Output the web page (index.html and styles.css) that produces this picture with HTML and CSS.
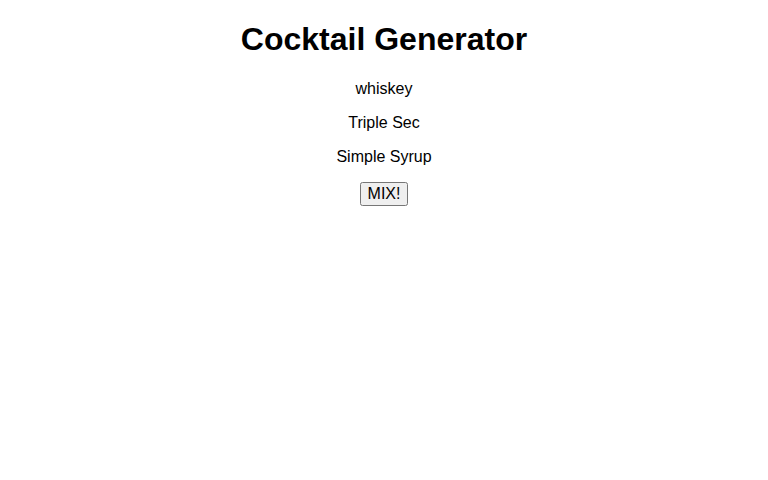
FILE: index.html
```html
<!DOCTYPE html>
<html lang="en">
    <head>
        <meta charset="UTF-8">
        <meta name="viewport" content="width=device-width, initial-scale=1.0">
        <title>Cocktail Generator</title>
        <link rel="stylesheet" href="styles.css">
    </head>
    <body>
		<div class="container">
			<h1 class="title">Cocktail Generator</h1>
			<p class="ingredient">whiskey</p>
			<p class="ingredient">Triple Sec</p>
			<p class="ingredient">Simple Syrup</p>
			<div class="actions">
				<button class="mix">MIX!</button>
			</div>
		</div>
	</body>
</html>
```
FILE: styles.css
```css
body {
	margin: 0;
	font-family: "Liberation Sans", Arial, sans-serif;
	color: black;
	background-color: white;
}
div.container {
	text-align: center;
}
h1.title {
	font-size: 2em;
	margin: 0.67em 0;
}
p.ingredient {
	font-size: 16px;
	margin: 16px 0;
}
button.mix {
	font-family: "Liberation Sans", Arial, sans-serif;
	font-size: 16px;
}
```
